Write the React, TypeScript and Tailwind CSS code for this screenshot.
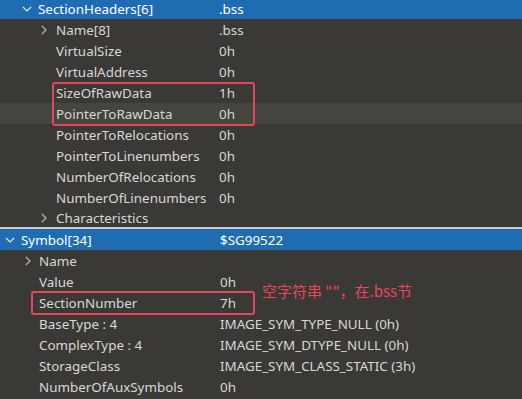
import React from "react";

const font = { fontFamily: '"Noto Sans", "Open Sans", sans-serif' };

function ChevDown({ className }: { className?: string }) {
  return (
    <svg width="10" height="6" viewBox="0 0 10 6" className={className}>
      <path d="M0.8 0.8 L5 5 L9.2 0.8" fill="none" stroke="currentColor" strokeWidth="1.2" />
    </svg>
  );
}
function ChevRight({ className }: { className?: string }) {
  return (
    <svg width="6" height="10" viewBox="0 0 6 10" className={className}>
      <path d="M0.8 0.8 L5 5 L0.8 9.2" fill="none" stroke="currentColor" strokeWidth="1.2" />
    </svg>
  );
}

type Row = { name: string; value?: string; chev?: boolean; hl?: boolean };

const sec: Row[] = [
  { name: "Name[8]", value: ".bss", chev: true },
  { name: "VirtualSize", value: "0h" },
  { name: "VirtualAddress", value: "0h" },
  { name: "SizeOfRawData", value: "1h" },
  { name: "PointerToRawData", value: "0h", hl: true },
  { name: "PointerToRelocations", value: "0h" },
  { name: "PointerToLinenumbers", value: "0h" },
  { name: "NumberOfRelocations", value: "0h" },
  { name: "NumberOfLinenumbers", value: "0h" },
];

const sym: Row[] = [
  { name: "Name", chev: true },
  { name: "Value", value: "0h" },
  { name: "SectionNumber", value: "7h" },
  { name: "BaseType : 4", value: "IMAGE_SYM_TYPE_NULL (0h)" },
  { name: "ComplexType : 4", value: "IMAGE_SYM_DTYPE_NULL (0h)" },
  { name: "StorageClass", value: "IMAGE_SYM_CLASS_STATIC (3h)" },
  { name: "NumberOfAuxSymbols", value: "0h" },
];

function DataRow({ r, indent, chevLeft, valueX }: { r: Row; indent: number; chevLeft: number; valueX: number }) {
  return (
    <div className={`relative flex h-[21px] items-center pt-[2px] ${r.hl ? "bg-[#45443f]" : ""}`}>
      {r.chev && (
        <span className="absolute top-[6px] text-[#bdbdbd]" style={{ left: chevLeft }}>
          <ChevRight />
        </span>
      )}
      <span className="whitespace-nowrap" style={{ paddingLeft: indent, width: valueX }}>{r.name}</span>
      {r.value && <span className="whitespace-nowrap">{r.value}</span>}
    </div>
  );
}

export default function App() {
  return (
    <div className="relative h-[399px] w-[522px] overflow-hidden bg-[#3a3935] text-[13.4px] text-[#d8d8d8]" style={font}>
      <div className="mt-[-2px] flex flex-col">
        <div className="relative flex h-[21px] items-center bg-[#1f6cb3] pt-[2px] text-white">
          <span className="absolute left-[22px] top-[8px] text-[#e8eef5]"><ChevDown /></span>
          <span className="w-[219px] pl-[38px]">SectionHeaders[6]</span>
          <span>.bss</span>
        </div>
        {sec.map((r) => (
          <DataRow key={r.name} r={r} indent={56} chevLeft={41} valueX={219} />
        ))}
        <div className="relative flex h-[19px] items-center pt-[2px]">
          <span className="absolute left-[41px] top-[5px] text-[#bdbdbd]"><ChevRight /></span>
          <span className="pl-[56px]">Characteristics</span>
        </div>
        <div className="h-[2px] bg-[#c9c9c9]" />
        <div className="relative flex h-[21px] items-center bg-[#1f6cb3] pt-[2px] text-white">
          <span className="absolute left-[5px] top-[8px] text-[#e8eef5]"><ChevDown /></span>
          <span className="w-[220px] pl-[21px]">Symbol[34]</span>
          <span>$SG99522</span>
        </div>
        {sym.map((r) => (
          <DataRow key={r.name} r={r} indent={39} chevLeft={25} valueX={220} />
        ))}
      </div>

      <div className="absolute left-[52px] top-[82px] h-[44px] w-[203px] rounded-[3px] border-2 border-[#e2485c]" />
      <div className="absolute left-[31px] top-[291px] h-[24px] w-[224px] rounded-[3px] border-2 border-[#e2485c]" />
      <div
        className="absolute left-[262px] top-[280px] whitespace-nowrap text-[15px] text-[#e8475b]"
        style={{ fontFamily: '"Noto Sans CJK SC", "Noto Sans", sans-serif' }}
      >
        空字符串 ""，在.bss节
      </div>
    </div>
  );
}
